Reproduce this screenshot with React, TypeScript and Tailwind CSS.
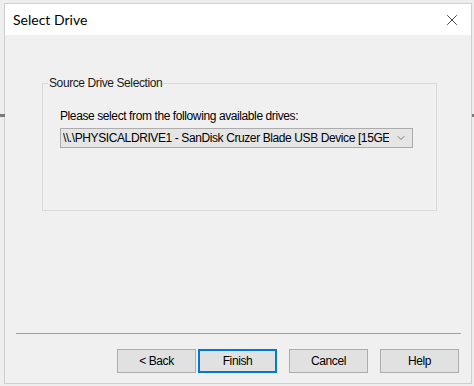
import { ChevronDown, X } from 'lucide-react';

const buttons = [
  { label: '< Back', cls: 'ml-[112px]' },
  { label: 'Finish', cls: 'ml-[2px]', primary: true },
  { label: 'Cancel', cls: 'ml-[12px]' },
  { label: 'Help', cls: 'ml-[12px]' },
];

export default function App() {
  return (
    <div className="relative h-[386px] w-[474px] overflow-hidden bg-[#eeeeee] pl-[4px] pt-[3px]" style={{ fontFamily: '"Liberation Sans", Arial, sans-serif' }}>
      {/* bits of the window behind */}
      <div className="absolute left-0 top-[114px] h-[3px] w-[5px] bg-[#7a7a7a]" />
      <div className="absolute right-0 top-[114px] h-[3px] w-[2px] bg-[#7a7a7a]" />

      <div className="flex h-[381px] w-[468px] flex-col border border-[#cfcfcf] bg-[#f0f0f0]">
        <div className="flex h-[31px] items-center justify-between bg-white pl-[8px] pr-[10px]">
          <span className="text-[14px] text-black" style={{ fontFamily: 'Lato, "Noto Sans", sans-serif' }}>
            Select Drive
          </span>
          <X className="h-[18px] w-[18px] text-[#333]" strokeWidth={1.2} />
        </div>

        <div className="relative ml-[37px] mt-[48px] h-[128px] w-[395px] border border-[#d9d9d9] pl-[17px] pt-[25px] text-[12px] tracking-[-0.4px]">
          <span className="absolute left-[5px] top-[-8px] bg-[#f0f0f0] px-[1px] leading-[14px] text-[#1a1a1a]">
            Source Drive Selection
          </span>
          <div className="leading-[14px] text-black">Please select from the following available drives:</div>
          <div className="mt-[5px] flex h-[20px] w-[353px] items-center justify-between border border-[#acacac] bg-[#e5e5e5] pl-[2px] pr-[5px]">
            <span className="overflow-hidden whitespace-nowrap leading-[14px] text-black">
              \\.\PHYSICALDRIVE1 - <span className="underline decoration-[#0000d0] decoration-2 underline-offset-[3px]">SanDisk</span> Cruzer Blade USB Device [15GE
            </span>
            <ChevronDown className="ml-[6px] h-[12px] w-[12px] shrink-0 text-[#555]" strokeWidth={1.5} />
          </div>
        </div>

        <div className="ml-[11px] mt-[122px] h-[2px] w-[445px] border-t border-[#a0a0a0] border-b-white" />

        <div className="mt-[14px] flex">
          {buttons.map((b) => (
            <div
              key={b.label}
              className={`${b.cls} flex h-[24px] w-[79px] items-center justify-center text-[12px] tracking-[-0.4px] text-black ${
                b.primary ? 'border-2 border-[#0078d7] bg-[#e1e1e1]' : 'border border-[#adadad] bg-[#e1e1e1]'
              }`}
            >
              {b.label}
            </div>
          ))}
        </div>
      </div>
    </div>
  );
}
